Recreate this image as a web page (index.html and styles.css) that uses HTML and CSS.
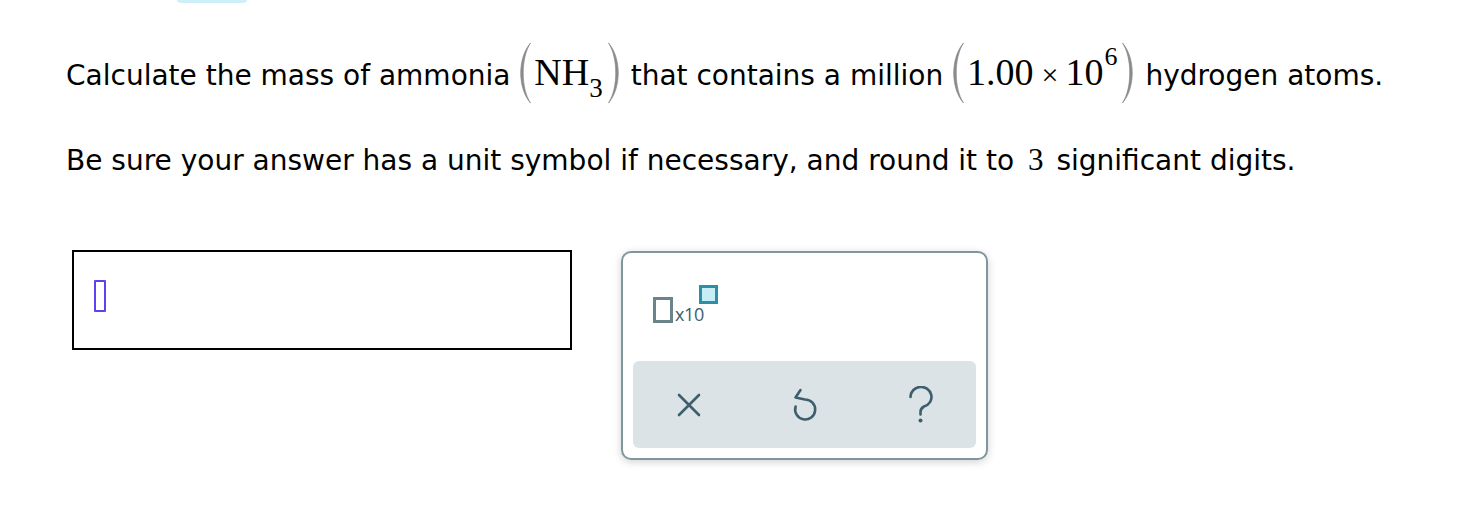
FILE: index.html
```html
<!DOCTYPE html>
<html>
<head>
<meta charset="utf-8">
<link rel="stylesheet" href="styles.css">
</head>
<body>
<div class="page">
  <div class="tab-stub"></div>
  <p class="q line1">Calculate the mass of ammonia <span class="math"><svg class="paren" width="15" height="62" viewBox="0 0 15 62"><path d="M13.5 1 C 0.5 16 0.5 46 13.5 61 C 3.8 46 3.8 16 13.5 1 Z" fill="#8a8a8a" stroke="#8a8a8a" stroke-width="0.7" stroke-linejoin="round"/></svg><span class="mi">NH<span class="sub">3</span></span><svg class="paren" width="15" height="62" viewBox="0 0 15 62"><path d="M1.5 1 C 14.5 16 14.5 46 1.5 61 C 11.2 46 11.2 16 1.5 1 Z" fill="#8a8a8a" stroke="#8a8a8a" stroke-width="0.7" stroke-linejoin="round"/></svg></span> that contains a million <span class="math"><svg class="paren" width="15" height="62" viewBox="0 0 15 62"><path d="M13.5 1 C 0.5 16 0.5 46 13.5 61 C 3.8 46 3.8 16 13.5 1 Z" fill="#8a8a8a" stroke="#8a8a8a" stroke-width="0.7" stroke-linejoin="round"/></svg><span class="mi">1.00<span class="times">×</span>10<span class="sup">6</span></span><svg class="paren" width="15" height="62" viewBox="0 0 15 62"><path d="M1.5 1 C 14.5 16 14.5 46 1.5 61 C 11.2 46 11.2 16 1.5 1 Z" fill="#8a8a8a" stroke="#8a8a8a" stroke-width="0.7" stroke-linejoin="round"/></svg></span> hydrogen atoms.</p>
  <p class="q line2">Be sure your answer has a unit symbol if necessary, and round it to <span class="num">3</span> significant digits.</p>
  <div class="answer-row">
    <div class="answer-box"><span class="caret"></span></div>
    <div class="keypad">
      <div class="sci">
        <span class="sq-base"></span><span class="x10">x10</span><span class="sq-exp"></span>
      </div>
      <div class="tools">
        <svg class="ico" width="26" height="26" viewBox="0 0 26 26"><path d="M3 3 L23 23 M23 3 L3 23" stroke="#3d5e6c" stroke-width="2.6" stroke-linecap="round" fill="none"/></svg>
        <svg class="ico" width="28" height="34" viewBox="0 0 28 34"><path d="M9.5 2 L4.5 9.5 L14 11.5 A 10 10 0 1 1 4.6 18.6" stroke="#3d5e6c" stroke-width="2.6" stroke-linecap="round" stroke-linejoin="round" fill="none"/></svg>
        <svg class="ico" width="26" height="38" viewBox="0 0 26 38"><path d="M2.5 11 A 10.5 10 0 1 1 16 20.5 Q 12.5 22.5 12.5 26 L12.5 28.5" stroke="#3d5e6c" stroke-width="2.6" stroke-linecap="round" fill="none"/><circle cx="12.5" cy="34.5" r="2" fill="#3d5e6c"/></svg>
      </div>
    </div>
  </div>
</div>
</body>
</html>
```
FILE: styles.css
```css
html, body {
  margin: 0;
  padding: 0;
  background: #ffffff;
}
.page {
  position: relative;
  width: 1484px;
  height: 514px;
  overflow: hidden;
  font-family: "DejaVu Sans", Verdana, sans-serif;
  color: #000;
}
.tab-stub {
  position: absolute;
  left: 176px;
  top: -8px;
  width: 72px;
  height: 11px;
  border-radius: 6px;
  background: #cdeff7;
}
.q {
  margin: 0;
  padding-left: 66px;
  font-size: 28px;
  white-space: nowrap;
}
.line1 {
  margin-top: 27px;
  height: 90px;
  line-height: 90px;
}
.line2 {
  margin-top: 24px;
  height: 40px;
  line-height: 40px;
}
.math {
  font-family: "Liberation Serif", "Times New Roman", serif;
  font-size: 38px;
}
.paren {
  display: inline-block;
  vertical-align: -19px;
}
.math .paren:first-child {
  margin: 0 2px 0 -2px;
}
.math .paren:last-child {
  margin: 0 0 0 4px;
}
.mi {
  line-height: 1;
}
.times {
  margin: 0 7px 0 8px;
  font-size: 30px;
}
.sub {
  font-size: 27px;
  line-height: 1;
  vertical-align: -12px;
}
.sup {
  font-size: 26px;
  line-height: 1;
  vertical-align: 20px;
  margin-left: 1px;
}
.num {
  font-family: "Liberation Serif", "Times New Roman", serif;
  font-size: 31px;
  line-height: 1;
  margin: 0 4px 0 5px;
}
.answer-row {
  display: flex;
  align-items: flex-start;
  margin-top: 69px;
  padding-left: 72px;
  gap: 49px;
}
.answer-box {
  box-sizing: border-box;
  width: 500px;
  height: 100px;
  border: 2px solid #000;
  padding: 28px 0 0 20px;
}
.caret {
  display: block;
  width: 12px;
  height: 32px;
  box-sizing: border-box;
  border: 2px solid #6040f0;
  border-radius: 1px;
}
.keypad {
  box-sizing: border-box;
  width: 367px;
  height: 209px;
  margin-top: 1px;
  border: 2px solid #7f969d;
  border-radius: 10px;
  box-shadow: 0 2px 8px rgba(0,0,0,0.18);
  padding: 30px 10px 10px 10px;
  display: flex;
  flex-direction: column;
}
.sci {
  position: relative;
  height: 78px;
  padding-left: 20px;
  display: flex;
  align-items: flex-start;
}
.sq-base {
  margin-top: 14px;
  width: 20px;
  height: 26px;
  box-sizing: border-box;
  border: 3px solid #6b848c;
}
.x10 {
  margin-top: 22px;
  margin-left: 2px;
  font-family: "Open Sans", "Noto Sans", sans-serif;
  font-size: 18px;
  color: #3d5e6c;
  letter-spacing: -0.4px;
  line-height: 18px;
}
.sq-exp {
  margin-left: -5px;
  margin-top: 2px;
  width: 19px;
  height: 19px;
  box-sizing: border-box;
  border: 3px solid #2a90a8;
  background: #c9edf4;
}
.tools {
  height: 87px;
  background: #dce3e6;
  border-radius: 6px;
  display: flex;
  align-items: center;
  justify-content: space-between;
  padding: 0 42px 0 43px;
}
.ico {
  display: block;
}
```
